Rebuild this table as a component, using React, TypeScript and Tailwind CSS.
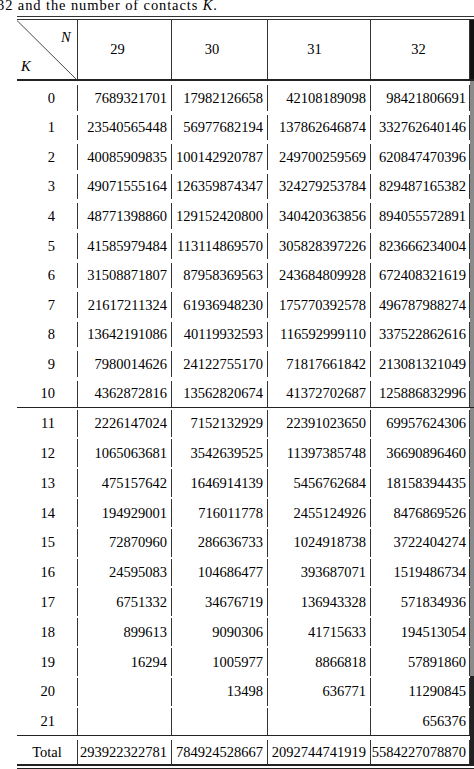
import React from "react";

type RowData = [string, string, string, string, string];

const section1: RowData[] = [
  ["0", "7689321701", "17982126658", "42108189098", "98421806691"],
  ["1", "23540565448", "56977682194", "137862646874", "332762640146"],
  ["2", "40085909835", "100142920787", "249700259569", "620847470396"],
  ["3", "49071555164", "126359874347", "324279253784", "829487165382"],
  ["4", "48771398860", "129152420800", "340420363856", "894055572891"],
  ["5", "41585979484", "113114869570", "305828397226", "823666234004"],
  ["6", "31508871807", "87958369563", "243684809928", "672408321619"],
  ["7", "21617211324", "61936948230", "175770392578", "496787988274"],
  ["8", "13642191086", "40119932593", "116592999110", "337522862616"],
  ["9", "7980014626", "24122755170", "71817661842", "213081321049"],
  ["10", "4362872816", "13562820674", "41372702687", "125886832996"],
];

const section2: RowData[] = [
  ["11", "2226147024", "7152132929", "22391023650", "69957624306"],
  ["12", "1065063681", "3542639525", "11397385748", "36690896460"],
  ["13", "475157642", "1646914139", "5456762684", "18158394435"],
  ["14", "194929001", "716011778", "2455124926", "8476869526"],
  ["15", "72870960", "286636733", "1024918738", "3722404274"],
  ["16", "24595083", "104686477", "393687071", "1519486734"],
  ["17", "6751332", "34676719", "136943328", "571834936"],
  ["18", "899613", "9090306", "41715633", "194513054"],
  ["19", "16294", "1005977", "8866818", "57891860"],
  ["20", "", "13498", "636771", "11290845"],
  ["21", "", "", "", "656376"],
];

const totals: RowData = ["Total", "293922322781", "784924528667", "2092744741919", "5584227078870"];

function Row({ d, rowCls, stripCls, kCls }: { d: RowData; rowCls: string; stripCls: string; kCls: string }) {
  return (
    <div className={"grid grid-cols-[60px_94px_96px_103px_100px_4px] " + rowCls}>
      <div className={kCls}>{d[0]}</div>
      <div className="flex items-center justify-end pr-[4px] border-l border-[#333]">{d[1]}</div>
      <div className="flex items-center justify-end pr-[4px] border-l border-[#333]">{d[2]}</div>
      <div className="flex items-center justify-end pr-[4px] border-l border-[#333]">{d[3]}</div>
      <div className="flex items-center justify-end pr-[3px] border-l border-r border-[#333]">{d[4]}</div>
      <div className={stripCls}></div>
    </div>
  );
}

export default function App() {
  return (
    <div className="w-[474px] h-[769px] overflow-hidden bg-white text-[#000] font-['Liberation_Serif',serif] text-[14.5px]">
      <div className="h-[16px] flex items-start">
        <div className="-ml-[3px] -mt-[2px] leading-[14.5px] whitespace-nowrap tracking-[0.9px]">
          32 and the number of contacts <span className="italic">K</span>.
        </div>
      </div>
      <div className="ml-[17px] w-[457px] flex flex-col leading-[14.5px]">
        <div className="h-px bg-[#333]"></div>
        <div className="h-[2px]"></div>
        <div className="h-px bg-[#333]"></div>
        {/* header */}
        <div className="grid grid-cols-[60px_94px_96px_103px_100px_4px] h-[59px]">
          <div className="relative">
            <svg className="absolute inset-0 overflow-visible" width="60" height="59" viewBox="0 0 60 59">
              <line x1="0" y1="0.5" x2="60" y2="60" stroke="#333" strokeWidth="0.9" />
            </svg>
            <span className="absolute left-[44px] top-[9.5px] italic">N</span>
            <span className="absolute left-[4px] top-[38.5px] italic">K</span>
          </div>
          <div className="flex items-center justify-center pr-[14px] border-l border-[#333]">29</div>
          <div className="flex items-center justify-center pr-[15px] border-l border-[#333]">30</div>
          <div className="flex items-center justify-center pr-[9px] border-l border-[#333]">31</div>
          <div className="flex items-center justify-center pr-[3px] border-l border-r border-[#333]">32</div>
          <div className="bg-[#111]"></div>
        </div>
        <div className="h-[2px] bg-[#222]"></div>
        {section1.map((d) => (
          <Row
            key={d[0]}
            d={d}
            rowCls="h-[29.6px] pt-[4px]"
            stripCls="bg-[#8a8a8a] -mt-[4px]"
            kCls="flex items-center justify-end pr-[22px]"
          />
        ))}
        <div className="h-px bg-[#222]"></div>
        {section2.map((d) => (
          <Row
            key={d[0]}
            d={d}
            rowCls="h-[29.8px] pt-[2px]"
            stripCls={d[0] === "20" || d[0] === "21" ? "bg-[#222] -mt-[2px]" : "bg-[#8a8a8a] -mt-[2px]"}
            kCls="flex items-center justify-end pr-[22px]"
          />
        ))}
        <div className="h-px bg-[#222]"></div>
        <Row
          d={totals}
          rowCls="h-[28px] pt-[4px]"
          stripCls="bg-[#222] -mt-[4px]"
          kCls="flex items-center justify-center"
        />
        <div className="h-[1.5px] bg-[#222]"></div>
        <div className="h-[2px]"></div>
        <div className="h-[1.5px] bg-[#222]"></div>
      </div>
    </div>
  );
}
